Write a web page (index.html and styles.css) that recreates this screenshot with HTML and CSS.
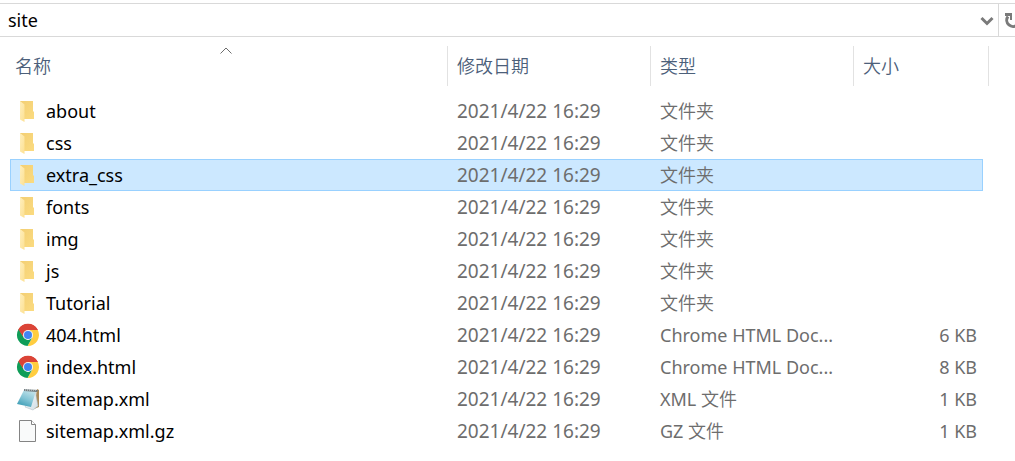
FILE: index.html
```html
<!DOCTYPE html>
<html lang="zh-CN">
<head>
<meta charset="utf-8">
<meta name="viewport" content="width=device-width, initial-scale=1">
<title>site</title>
<link rel="stylesheet" href="styles.css">
</head>
<body>
<svg class="sprite" aria-hidden="true">
  <defs>
    <linearGradient id="folder-back" x1="0" y1="0" x2="1" y2="1"><stop offset="0" stop-color="#f3cf74"/><stop offset="1" stop-color="#fbdb80"/></linearGradient>
    <linearGradient id="folder-front" x1="0" y1="0" x2="1" y2="1"><stop offset="0" stop-color="#ffefbd"/><stop offset="1" stop-color="#fce092"/></linearGradient>
    <linearGradient id="note-cover" x1="0.7" y1="0" x2="0.2" y2="1"><stop offset="0" stop-color="#c4e3ea"/><stop offset="0.5" stop-color="#84c5d6"/><stop offset="1" stop-color="#3599b2"/></linearGradient>
    <linearGradient id="note-page" x1="0" y1="0" x2="1" y2="1"><stop offset="0" stop-color="#fff"/><stop offset="1" stop-color="#cfdde4"/></linearGradient>
  </defs>
  <symbol id="folder" viewBox="0 0 24 24">
    <path d="M4 2H17V12L18 13V20H8L4 16Z" fill="url(#folder-back)"/>
    <path d="M4 2L8.500 5.500V23L4 20.500Z" fill="url(#folder-front)"/>
  </symbol>
  <symbol id="chrome" viewBox="0 0 24 24">
    <circle cx="12" cy="12" r="11" fill="#fff"/>
    <path d="M12 12L2.4 6.5A11 11 0 0 1 21.6 6.5V7H12Z" fill="#db4437"/>
    <path d="M21.8 7A11 11 0 0 1 11.5 23L16.4 14.5L16.3 9.5L12 7Z" fill="#ffcd40"/>
    <path d="M2.4 6.5A11 11 0 0 0 11.5 23L16.3 14.5L12 17L7.7 14.5L3 6Z" fill="#0f9d58"/>
    <path d="M2.4 6.5L7.7 14.5L8 9L12 7H21.8L21.2 5.9A11 11 0 0 0 2.7 6Z" fill="#db4437"/>
    <circle cx="12" cy="12" r="5" fill="#f1f1f1"/>
    <circle cx="12" cy="12" r="4" fill="#4285f4"/>
  </symbol>
  <symbol id="notepad" viewBox="0 0 24 24">
    <path d="M21 2L23 3V20L18 22Z" fill="#a98a5a"/>
    <path d="M19 3L22 19L17 23L9 20Z" fill="url(#note-page)" stroke="#a9b6bd" stroke-width=".5"/>
    <path d="M8 3L20 4L15 20L1 17Z" fill="url(#note-cover)"/>
    <path d="M8 2L22 3L21 5L8 4Z" fill="#737d80"/>
    <path d="M9 3H21" stroke="#dce2e4" stroke-dasharray="1 1"/>
  </symbol>
  <symbol id="document" viewBox="0 0 24 24">
    <path d="M3.500 1.500H15.500L19.500 5.500V22.500H3.500Z" fill="#f9fafa" stroke="#848484"/>
    <path d="M15.500 1.500V5.500H19.500" fill="#fff" stroke="#848484"/>
  </symbol>
</svg>

<header class="address">
  <input class="address-path" type="text" value="site" aria-label="地址">
  <button class="address-history" type="button" aria-label="历史记录">
    <svg class="chevron" viewBox="0 0 14 10"><path d="M1.500 2L7 7.500L12.500 2"/></svg>
  </button>
  <button class="address-refresh" type="button" aria-label="刷新">
    <svg class="refresh" viewBox="0 0 18 18"><path class="refresh-arc" d="M4 4.500A6.200 6.200 0 1 0 13.500 4"/><path class="refresh-tip" d="M1 1H8V8H6V4H1Z"/></svg>
  </button>
</header>

<main class="listing">
  <table class="files">
    <colgroup><col><col class="col-date"><col class="col-type"><col class="col-size"></colgroup>
    <thead>
      <tr>
        <th scope="col" aria-sort="ascending">名称<svg class="sort" viewBox="0 0 12 7"><path d="M.5 6.500L6 1L11.500 6.500"/></svg></th>
        <th scope="col">修改日期</th><th scope="col">类型</th><th scope="col">大小</th>
      </tr>
    </thead>
    <tbody>
      <tr><td><span class="name"><svg class="icon"><use href="#folder"/></svg>about</span></td><td class="date">2021/4/22 16:29</td><td class="kind">文件夹</td><td></td></tr>
      <tr><td><span class="name"><svg class="icon"><use href="#folder"/></svg>css</span></td><td class="date">2021/4/22 16:29</td><td class="kind">文件夹</td><td></td></tr>
      <tr class="selected"><td><span class="name"><svg class="icon"><use href="#folder"/></svg>extra_css</span></td><td class="date">2021/4/22 16:29</td><td class="kind">文件夹</td><td></td></tr>
      <tr><td><span class="name"><svg class="icon"><use href="#folder"/></svg>fonts</span></td><td class="date">2021/4/22 16:29</td><td class="kind">文件夹</td><td></td></tr>
      <tr><td><span class="name"><svg class="icon"><use href="#folder"/></svg>img</span></td><td class="date">2021/4/22 16:29</td><td class="kind">文件夹</td><td></td></tr>
      <tr><td><span class="name"><svg class="icon"><use href="#folder"/></svg>js</span></td><td class="date">2021/4/22 16:29</td><td class="kind">文件夹</td><td></td></tr>
      <tr><td><span class="name"><svg class="icon"><use href="#folder"/></svg>Tutorial</span></td><td class="date">2021/4/22 16:29</td><td class="kind">文件夹</td><td></td></tr>
      <tr><td><span class="name"><svg class="icon"><use href="#chrome"/></svg>404.html</span></td><td class="date">2021/4/22 16:29</td><td>Chrome HTML Doc...</td><td>6 KB</td></tr>
      <tr><td><span class="name"><svg class="icon"><use href="#chrome"/></svg>index.html</span></td><td class="date">2021/4/22 16:29</td><td>Chrome HTML Doc...</td><td>8 KB</td></tr>
      <tr><td><span class="name"><svg class="icon"><use href="#notepad"/></svg>sitemap.xml</span></td><td class="date">2021/4/22 16:29</td><td>XML <span class="kind">文件</span></td><td>1 KB</td></tr>
      <tr><td><span class="name"><svg class="icon"><use href="#document"/></svg>sitemap.xml.gz</span></td><td class="date">2021/4/22 16:29</td><td>GZ <span class="kind">文件</span></td><td>1 KB</td></tr>
    </tbody>
  </table>
</main>
</body>
</html>
```
FILE: styles.css
```css
* { box-sizing: border-box; }

body {
  margin: 0;
  padding-top: 3px;
  background: #fff;
  color: #000;
  font: 18px/24px "Noto Sans", "Noto Sans CJK SC", sans-serif;
}

.sprite { position: absolute; width: 0; height: 0; }

.address {
  display: flex;
  height: 34px;
  border: solid #d9d9d9;
  border-width: 1px 0;
  overflow: hidden;
}

.address-path {
  flex: 1;
  min-width: 0;
  padding: 0 8px;
  border: 0;
  outline: 0;
  background: transparent;
  color: inherit;
  font: inherit;
}

.address button {
  display: flex;
  align-items: center;
  flex: none;
  padding: 0;
  border: 0;
  background: transparent;
}

.address .address-history { width: 20px; padding: 2px 0 0 2px; }
.address .address-refresh { width: 17px; padding: 2px 0 0 5px; border-left: 1px solid #d9d9d9; }

.chevron { width: 14px; height: 10px; fill: none; stroke: #7a7a7a; stroke-width: 3; }
.refresh { flex: none; width: 18px; height: 18px; }
.refresh-arc { fill: none; stroke: #7a7a7a; stroke-width: 3; }
.refresh-tip { fill: #7a7a7a; }

.listing { padding: 9px 26px 12px 10px; }

.files {
  width: 100%;
  table-layout: fixed;
  border-collapse: separate;
  border-spacing: 0;
}

.col-date, .col-type { width: 203px; }
.col-size { width: 135px; }

.files th {
  position: relative;
  height: 40px;
  padding: 0 9px;
  border-right: 1px solid #e2e2e2;
  color: #4c607a;
  font-weight: 350;
  text-align: left;
}

.files th:first-child { padding-left: 5px; }

.sort {
  position: absolute;
  top: 1px;
  left: 0;
  right: 6px;
  width: 12px;
  height: 7px;
  margin: 0 auto;
  fill: none;
  stroke: #6d6d6d;
}

.files tbody::before { content: ""; display: block; height: 9px; }

.files td {
  height: 32px;
  padding: 0 9px;
  color: #6d6d6d;
  white-space: nowrap;
}

.files td:first-child { padding-left: 6px; color: #000; }
.files .date { font-size: 19px; }
.files .kind { font-weight: 350; }

.files td:last-child {
  padding-right: 6px;
  border-right: 6px solid transparent;
  text-align: right;
}

.name { display: flex; align-items: center; gap: 6px; }
.icon { flex: none; width: 24px; height: 24px; }

.selected td {
  background: #cce8ff padding-box;
  box-shadow: inset 0 1px #99d1ff, inset 0 -1px #99d1ff;
}

.selected td:first-child { box-shadow: inset 0 1px #99d1ff, inset 0 -1px #99d1ff, inset 1px 0 #99d1ff; }
.selected td:last-child { box-shadow: inset 0 1px #99d1ff, inset 0 -1px #99d1ff, inset -1px 0 #99d1ff; }
```
